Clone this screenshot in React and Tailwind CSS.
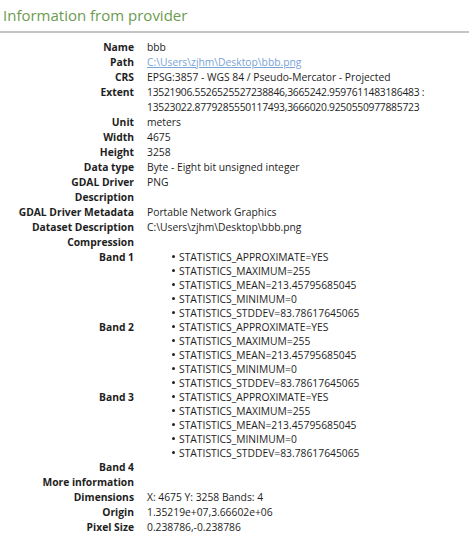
import React from "react";

const stats = [
  "STATISTICS_APPROXIMATE=YES",
  "STATISTICS_MAXIMUM=255",
  "STATISTICS_MEAN=213.45795685045",
  "STATISTICS_MINIMUM=0",
  "STATISTICS_STDDEV=83.78617645065",
];

function Row({ label, children }) {
  return (
    <div className="flex">
      <div className="w-[134px] shrink-0 text-right font-bold leading-[15px] whitespace-nowrap">{label}</div>
      <div className="pl-[13px] leading-[15px] whitespace-nowrap">{children}</div>
    </div>
  );
}

function BandRow({ label, items }) {
  return (
    <div className="flex">
      <div className="w-[134px] shrink-0 text-right font-bold leading-[15px]">{label}</div>
      <div className="pl-[38px]">
        {items.map((s) => (
          <div key={s} className="flex items-center h-[14px] leading-[14px] whitespace-nowrap">
            <span className="w-[3px] h-[3px] rounded-full bg-[#222] mr-[4px] -mt-[2px]"></span>
            <span>{s}</span>
          </div>
        ))}
      </div>
    </div>
  );
}

export default function App() {
  return (
    <div
      className="w-[474px] h-[560px] bg-white text-[#1e1e1e] text-[10.3px] overflow-hidden"
      style={{ fontFamily: '"Open Sans", "Noto Sans", sans-serif' }}
    >
      <div className="pl-[3px] pt-[4px] text-[15px] leading-[22px] text-[#6c9b4f]">
        Information from provider
      </div>
      <div className="mt-[5px] mr-[5px] h-[2px] bg-[#c4c4c4]"></div>
      <div className="pt-[7px]">
        <Row label="Name">bbb</Row>
        <Row label="Path">
          <span className="text-[#7aa3d6] underline">C:\Users\zjhm\Desktop\bbb.png</span>
        </Row>
        <Row label="CRS">EPSG:3857 - WGS 84 / Pseudo-Mercator - Projected</Row>
        <Row label="Extent">
          <span className="tracking-[-0.25px]">
            13521906.5526525527238846,3665242.9597611483186483 :
            <br />
            13523022.8779285550117493,3666020.9250550977885723
          </span>
        </Row>
        <Row label="Unit">meters</Row>
        <Row label="Width">4675</Row>
        <Row label="Height">3258</Row>
        <Row label="Data type">Byte - Eight bit unsigned integer</Row>
        <Row label={<>GDAL Driver<br />Description</>}>PNG</Row>
        <Row label="GDAL Driver Metadata">Portable Network Graphics</Row>
        <Row label="Dataset Description">C:\Users\zjhm\Desktop\bbb.png</Row>
        <Row label="Compression"></Row>
        <BandRow label="Band 1" items={stats} />
        <BandRow label="Band 2" items={stats} />
        <BandRow label="Band 3" items={stats} />
        <Row label="Band 4"></Row>
        <Row label="More information"></Row>
        <Row label="Dimensions">X: 4675 Y: 3258 Bands: 4</Row>
        <Row label="Origin">1.35219e+07,3.66602e+06</Row>
        <Row label="Pixel Size">0.238786,-0.238786</Row>
      </div>
    </div>
  );
}
